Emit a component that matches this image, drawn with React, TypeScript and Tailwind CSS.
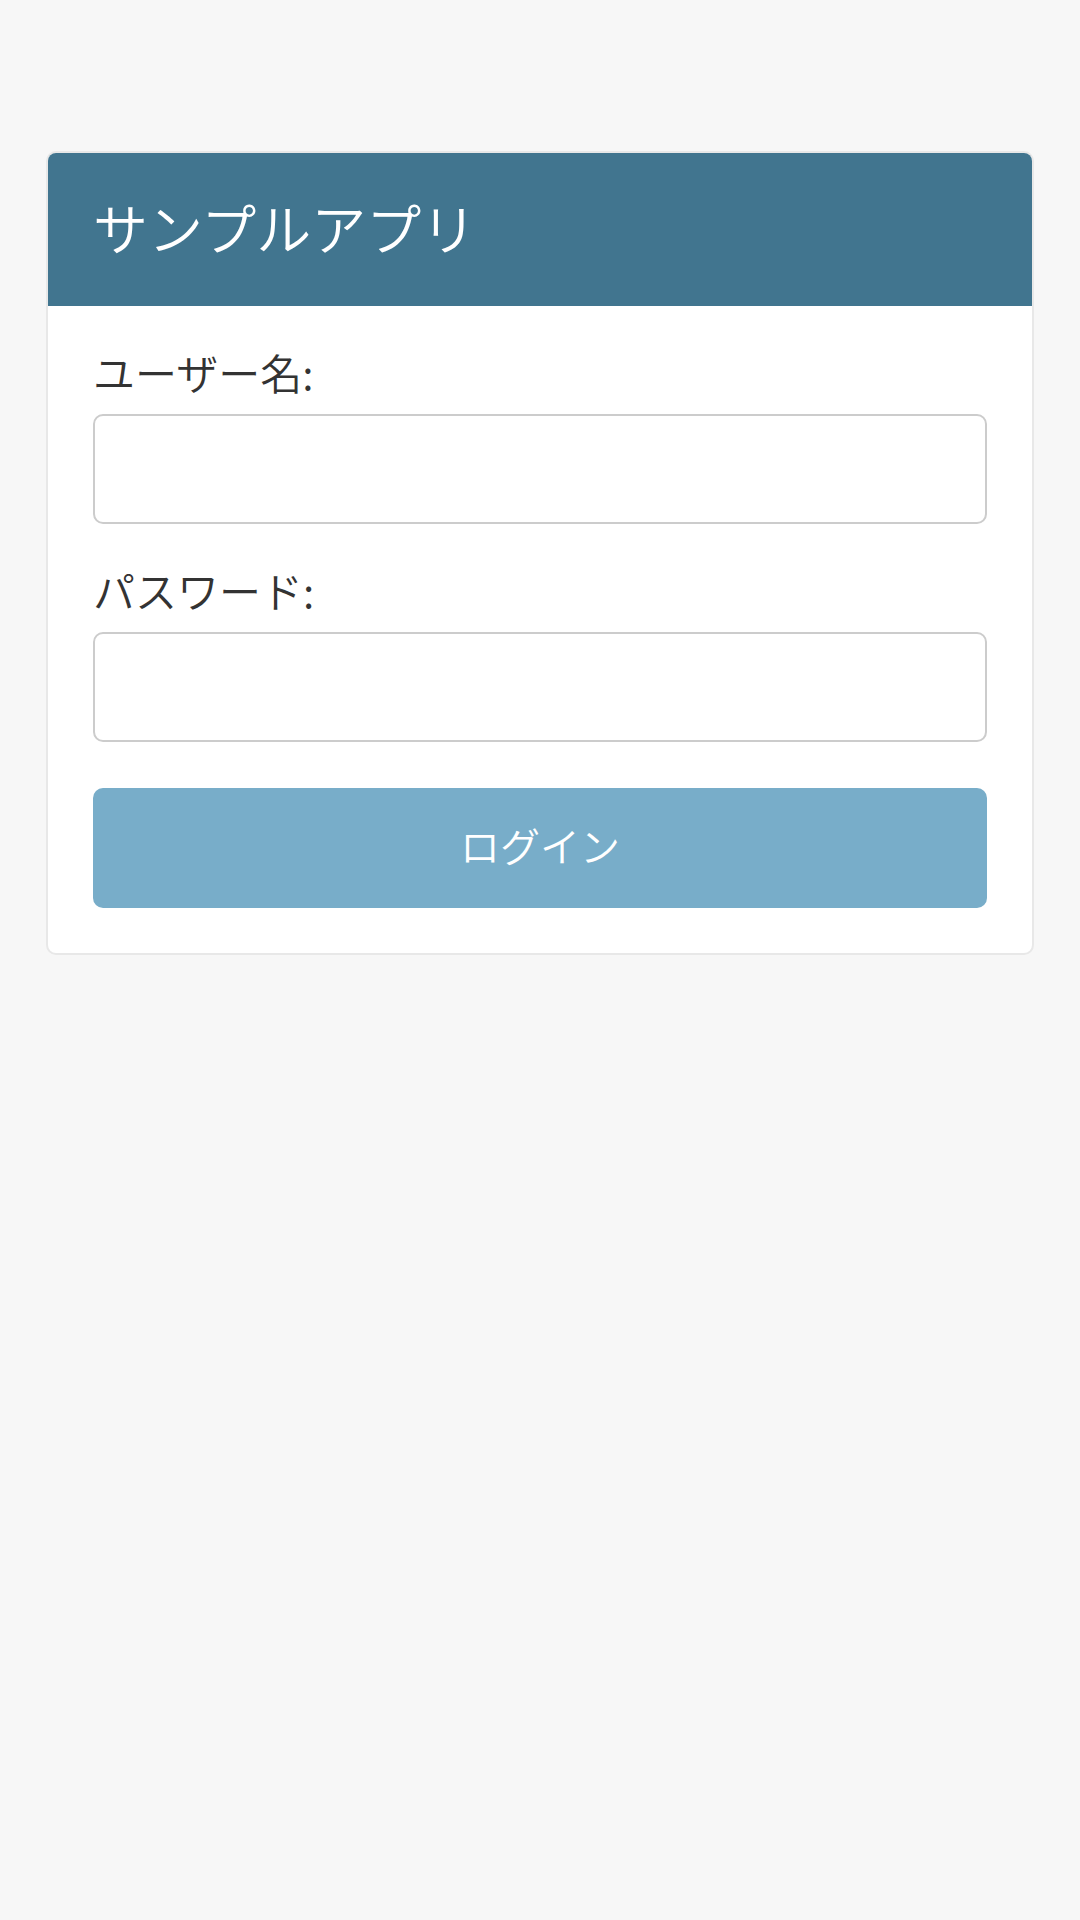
export default function App() {
  return (
    <div
      className="min-h-[1920px] bg-[#f7f7f7] px-[46px] pt-[151px]"
      style={{ fontFamily: '"Noto Sans CJK JP", "Noto Sans", sans-serif' }}
    >
      <div className="overflow-hidden rounded-[10px] border-2 border-[#e8e8e8] bg-white">
        {/* ヘッダー */}
        <div className="flex h-[153px] items-center bg-[#41758f] px-[45px] pb-[6px]">
          <h1 className="text-[55px] leading-none font-[350] text-white">サンプルアプリ</h1>
        </div>

        <form className="flex flex-col p-[45px]" onSubmit={(e) => e.preventDefault()}>
          <div className="mb-[45px]">
            <label className="mb-[21px] block text-[42px] leading-[42px] font-[350] text-[#333333]">
              ユーザー名:
            </label>
            <input
              type="text"
              className="block h-[110px] w-full rounded-[10px] border-2 border-[#cccccc] bg-white px-4 text-[40px] outline-none"
            />
          </div>

          <div className="mb-[46px]">
            <label className="mb-[21px] block text-[42px] leading-[42px] font-[350] text-[#333333]">
              パスワード:
            </label>
            <input
              type="password"
              className="block h-[110px] w-full rounded-[10px] border-2 border-[#cccccc] bg-white px-4 text-[40px] outline-none"
            />
          </div>

          <button
            type="submit"
            className="h-[120px] w-full rounded-[10px] bg-[#78adc9] pb-[6px] text-[40px] font-[350] text-white"
          >
            ログイン
          </button>
        </form>
      </div>
    </div>
  );
}
